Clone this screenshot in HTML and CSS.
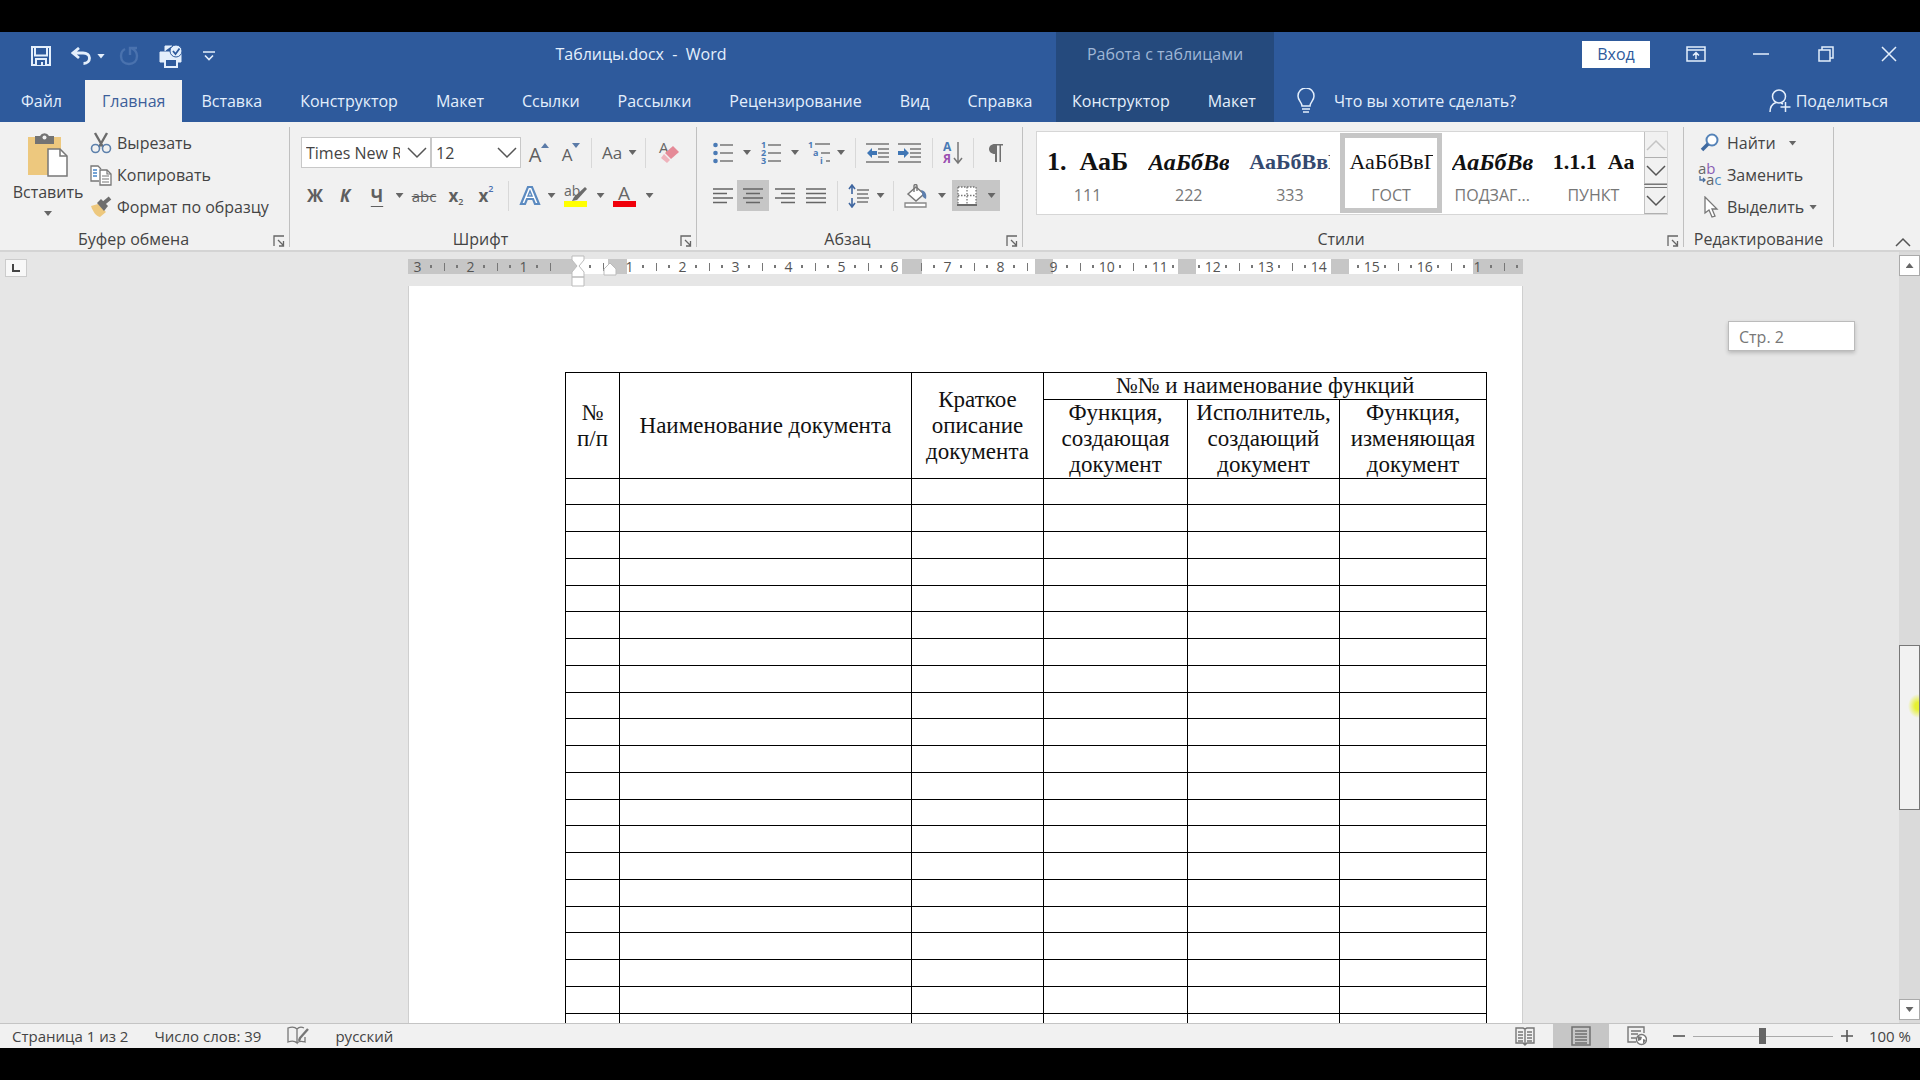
FILE: index.html
```html
<!DOCTYPE html>
<html lang="ru">
<head>
    <meta charset="UTF-8">
    <meta name="viewport" content="width=device-width, initial-scale=1.0">
    <title>Таблицы.docx - Word</title>
    <link rel="stylesheet" href="styles.css">
</head>
<body>
    <svg class="sprite" aria-hidden="true">
        <symbol id="launcher" viewBox="0 0 12 12"><path d="M1 11V1h10M5 5l5 5M10.5 6v5H6" fill="none" stroke="#666" stroke-width="1.3"/></symbol>
        <symbol id="chevron" viewBox="0 0 20 12"><path d="M1 1l9 9 9-9" fill="none" stroke="#555" stroke-width="1.5"/></symbol>
    </svg>

    <header class="header">
        <div class="title-row">
            <div class="quick">
                <button class="quick-btn" aria-label="Сохранить">
                    <svg width="20" height="20" viewBox="0 0 20 20"><path d="M1 1h18v18H1z" fill="none" stroke="#e4effc" stroke-width="2"/><path d="M3 9.5h14M4 2v7M16 2v7" stroke="#e4effc" stroke-width="2"/><path d="M4 12h12v7H4z" fill="#e4effc"/><path d="M6 14h8v5h-2v-3h-2v3H6z" fill="#2e5a9c"/></svg>
                </button>
                <button class="quick-btn undo" aria-label="Отменить">
                    <svg width="20" height="18" viewBox="0 0 20 18"><path d="M8 1L2 6l6 5M2 6h10c4 0 6.500 2 6.500 5s-2 5.500-6 5.500" fill="none" stroke="#e4effc" stroke-width="2.800"/></svg>
                    <span class="caret light"></span>
                </button>
                <button class="quick-btn" aria-label="Повторить">
                    <svg width="20" height="20" viewBox="0 0 20 20"><path d="M6 3C3 4.500 2 7 2 10c0 5 3.500 8 8 8s8-3 8-8c0-4-2-6-5-7.500M11 9V2h7" fill="none" stroke="#4a72ae" stroke-width="2.400"/></svg>
                </button>
                <button class="quick-btn" aria-label="Быстрая печать">
                    <svg width="24" height="24" viewBox="0 0 24 24"><path d="M6 7V2h7M1 8h21v10H1z" fill="#e4effc" stroke="#e4effc"/><path d="M6 15h12v8H6z" fill="#2e5a9c" stroke="#e4effc" stroke-width="2"/><circle cx="17" cy="7" r="6" fill="#e4effc" stroke="#2e5a9c"/><path d="M14 7l2.500 3 4-5.500" fill="none" stroke="#2e5a9c" stroke-width="1.800"/></svg>
                </button>
                <button class="quick-btn" aria-label="Настройка панели">
                    <svg width="12" height="10" viewBox="0 0 12 10"><path d="M0 1h12M2 4.500l4 4 4-4" fill="none" stroke="#e4effc" stroke-width="1.600"/></svg>
                </button>
            </div>
            <div class="title">Таблицы.docx&nbsp; -&nbsp; Word</div>
            <div class="context-title">Работа с таблицами</div>
            <div class="window-btns">
                <button class="login">Вход</button>
                <button class="win-btn" aria-label="Параметры ленты">
                    <svg width="20" height="16" viewBox="0 0 20 16"><path d="M1 1h18v14H1zM1 4h18M10 13V7M7 9.500L10 6.500l3 3" fill="none" stroke="#e4effc" stroke-width="1.500"/></svg>
                </button>
                <button class="win-btn" aria-label="Свернуть">
                    <svg width="16" height="16" viewBox="0 0 16 16"><path d="M0 8h16" stroke="#e4effc" stroke-width="1.500"/></svg>
                </button>
                <button class="win-btn" aria-label="Окно">
                    <svg width="16" height="16" viewBox="0 0 16 16"><path d="M1 4h11v11H1zM4 4V1h11v11h-3" fill="none" stroke="#e4effc" stroke-width="1.500"/></svg>
                </button>
                <button class="win-btn" aria-label="Закрыть">
                    <svg width="16" height="16" viewBox="0 0 16 16"><path d="M1 1l14 14M15 1L1 15" stroke="#e4effc" stroke-width="1.500"/></svg>
                </button>
            </div>
        </div>
        <nav class="tabs">
            <div class="tabs-main">
                <a class="tab" href="#">Файл</a>
                <a class="tab active" href="#">Главная</a>
                <a class="tab" href="#">Вставка</a>
                <a class="tab" href="#">Конструктор</a>
                <a class="tab" href="#">Макет</a>
                <a class="tab" href="#">Ссылки</a>
                <a class="tab" href="#">Рассылки</a>
                <a class="tab" href="#">Рецензирование</a>
                <a class="tab" href="#">Вид</a>
                <a class="tab" href="#">Справка</a>
            </div>
            <div class="tabs-context">
                <a class="tab" href="#">Конструктор</a>
                <a class="tab" href="#">Макет</a>
            </div>
            <label class="tell-me">
                <svg width="18" height="26" viewBox="0 0 18 26"><path d="M5 18c0-4-4-5-4-10a8 8 0 0 1 16 0c0 5-4 6-4 10zM5 21h8M6 24h6" fill="none" stroke="#e4effc" stroke-width="1.500"/></svg>
                <input type="text" placeholder="Что вы хотите сделать?" aria-label="Что вы хотите сделать?">
            </label>
            <button class="share">
                <svg width="22" height="24" viewBox="0 0 22 24"><circle cx="10" cy="7.500" r="6.500" fill="none" stroke="#e4effc" stroke-width="1.500"/><path d="M1 23c0-5 2-8 6-9.500M12 14l2 1M16.500 13v10M11.500 18h10" fill="none" stroke="#e4effc" stroke-width="1.500"/></svg>
                Поделиться
            </button>
        </nav>
    </header>

    <section class="ribbon">
        <div class="group clipboard">
            <div class="group-body">
                <button class="paste">
                    <svg width="42" height="44" viewBox="0 0 42 44"><path d="M1 4h33v38H1z" fill="#edc87e"/><path d="M8 3h5a5 5 0 0 1 9 0h5v8H8z" fill="#737373"/><circle cx="17.500" cy="4.500" r="2" fill="#f1f1f1"/><path d="M21 16h12l7 7v20H21z" fill="#fff" stroke="#777" stroke-width="1.500"/><path d="M33 16v7h7" fill="none" stroke="#777" stroke-width="1.500"/></svg>
                    <span>Вставить</span>
                    <span class="caret"></span>
                </button>
                <div class="commands">
                    <button class="command">
                        <svg width="22" height="22" viewBox="0 0 22 22"><path d="M5 1l8 14M17 1L9 15" stroke="#6b6b6b" stroke-width="2.400"/><circle cx="5.500" cy="16.500" r="4" fill="none" stroke="#5d80ab" stroke-width="1.600"/><circle cx="16.500" cy="16.500" r="4" fill="none" stroke="#5d80ab" stroke-width="1.600"/></svg>
                        Вырезать
                    </button>
                    <button class="command">
                        <svg width="22" height="22" viewBox="0 0 22 22"><path d="M9 17H1V2h7l3 3" fill="#fff" stroke="#777" stroke-width="1.300"/><path d="M3 6h4M3 9h4M3 12h4" stroke="#4a86c8" stroke-width="1.300"/><path d="M10 6h7l4 4v11H10z" fill="#fff" stroke="#777" stroke-width="1.300"/><path d="M12 12h7M12 15h7M12 18h7M17 6v4h4" fill="none" stroke="#777" stroke-width="1.200"/></svg>
                        Копировать
                    </button>
                    <button class="command">
                        <svg width="22" height="22" viewBox="0 0 22 22"><path d="M1 10l7-2 8 8-6 5c-4-1-7-5-9-11z" fill="#edc87e"/><path d="M7 7l4-4 7 7-4 5z" fill="#6e6e6e"/><path d="M14 7l6-5" stroke="#6e6e6e" stroke-width="4"/></svg>
                        Формат по образцу
                    </button>
                </div>
            </div>
            <div class="group-label">Буфер обмена</div>
            <button class="launcher" aria-label="Буфер обмена"><svg width="12" height="12"><use href="#launcher"/></svg></button>
        </div>

        <div class="group font">
            <div class="group-body rows">
                <div class="tool-row">
                    <span class="combo combo-font">
                        <select aria-label="Шрифт"><option>Times New Roman</option></select>
                        <svg class="chev" width="20" height="12"><use href="#chevron"/></svg>
                    </span>
                    <span class="combo combo-size">
                        <select aria-label="Размер"><option>12</option></select>
                        <svg class="chev" width="20" height="12"><use href="#chevron"/></svg>
                    </span>
                    <button class="tool w36 grow" aria-label="Увеличить">A<svg width="8" height="5"><path d="M0 5l4-5 4 5z" fill="#5b7ba8"/></svg></button>
                    <button class="tool w28 grow small" aria-label="Уменьшить">A<svg width="8" height="5"><path d="M0 0l4 5 4-5z" fill="#5b7ba8"/></svg></button>
                    <span class="sep"></span>
                    <button class="tool w28 case">Aa</button>
                    <span class="caret-box"><span class="caret"></span></span>
                    <span class="sep"></span>
                    <button class="tool w32" aria-label="Очистить">
                        <svg width="24" height="24" viewBox="0 0 24 24"><text x="3" y="12" font-size="15" class="glyph">A</text><path d="M17 5l6 6-8 7-6-6z" fill="#e58a97"/><path d="M8 13l6 6-3 3-6-5z" fill="#efb3bc"/></svg>
                    </button>
                </div>
                <div class="tool-row">
                    <button class="tool w28 b">Ж</button>
                    <button class="tool w32 b i">К</button>
                    <button class="tool w32 b u">Ч</button>
                    <span class="caret-box"><span class="caret"></span></span>
                    <button class="tool w36 strike">abc</button>
                    <button class="tool w28 b">x<sub>2</sub></button>
                    <button class="tool w32 b">x<sup>2</sup></button>
                    <span class="sep"></span>
                    <button class="tool w30" aria-label="Эффекты">
                        <svg width="22" height="24" viewBox="0 0 22 24"><path d="M2 20L9 3h4l7 17h-4l-2-5H8l-2 5z" fill="#fff" stroke="#5b8ac0" stroke-width="2.200"/><path d="M9 12h4l-2-5z" fill="#fff" stroke="#5b8ac0" stroke-width="1.500"/></svg>
                    </button>
                    <span class="caret-box"><span class="caret"></span></span>
                    <button class="tool w36" aria-label="Выделение цветом">
                        <svg width="24" height="24" viewBox="0 0 24 24"><text x="0" y="12" font-size="14" class="glyph">ab</text><path d="M21 3l2 2-10 11-5 1 2-4z" fill="#6b6b6b"/><path d="M0 17h23v6H0z" fill="#ff0"/></svg>
                    </button>
                    <span class="caret-box"><span class="caret"></span></span>
                    <button class="tool w36" aria-label="Цвет текста">
                        <svg width="24" height="24" viewBox="0 0 24 24"><text x="5" y="16" font-size="19" class="glyph">A</text><path d="M0 17h23v6H0z" fill="#f0000a"/></svg>
                    </button>
                    <span class="caret-box"><span class="caret"></span></span>
                </div>
            </div>
            <div class="group-label">Шрифт</div>
            <button class="launcher" aria-label="Шрифт"><svg width="12" height="12"><use href="#launcher"/></svg></button>
        </div>

        <div class="group paragraph">
            <div class="group-body rows">
                <div class="tool-row">
                    <button class="tool w28" aria-label="Маркеры">
                        <svg width="20" height="22" viewBox="0 0 20 22"><path d="M7 3h13M7 11h13M7 19h13" stroke="#777" stroke-width="1.500"/><g fill="#4a7ab5"><circle cx="2.500" cy="3" r="2.300"/><circle cx="2.500" cy="11" r="2.300"/><circle cx="2.500" cy="19" r="2.300"/></g></svg>
                    </button>
                    <span class="caret-box wide"><span class="caret"></span></span>
                    <button class="tool w28" aria-label="Нумерация">
                        <svg width="20" height="24" viewBox="0 0 20 24"><path d="M7 4h13M7 12h13M7 20h13" stroke="#777" stroke-width="1.500"/><g class="digits" font-size="9"><text x="0" y="7">1</text><text x="0" y="15">2</text><text x="0" y="23">3</text></g></svg>
                    </button>
                    <span class="caret-box wide"><span class="caret"></span></span>
                    <button class="tool w28" aria-label="Многоуровневый список">
                        <svg width="24" height="24" viewBox="0 0 24 24"><path d="M8 3h15M14 12h9M19 20h4" stroke="#777" stroke-width="1.500"/><g class="digits" font-size="9"><text x="1" y="7">1</text><text x="6" y="15">a</text><text x="13" y="23">i</text></g></svg>
                    </button>
                    <span class="caret-box mid"><span class="caret"></span></span>
                    <span class="sep"></span>
                    <button class="tool w32" aria-label="Уменьшить отступ">
                        <svg width="24" height="20" viewBox="0 0 24 20"><path d="M0 1h23M12 6h11M12 10h11M12 14h11M0 19h23" stroke="#777" stroke-width="1.500"/><path d="M1 10l5-5v3h5v4H6v3z" fill="#3f76b5"/></svg>
                    </button>
                    <button class="tool w32" aria-label="Увеличить отступ">
                        <svg width="24" height="20" viewBox="0 0 24 20"><path d="M0 1h23M12 6h11M12 10h11M12 14h11M0 19h23" stroke="#777" stroke-width="1.500"/><path d="M11 10L6 5v3H0v4h6v3z" fill="#3f76b5"/></svg>
                    </button>
                    <span class="sep"></span>
                    <button class="tool w28" aria-label="Сортировка">
                        <svg width="20" height="24" viewBox="0 0 20 24"><text x="0" y="10" font-size="12" font-weight="700" fill="#4a7ab5">А</text><text x="0" y="22" font-size="12" font-weight="700" fill="#9a4fb0">Я</text><path d="M15 1v20M11 17l4 5 4-5" fill="none" stroke="#777" stroke-width="1.500"/></svg>
                    </button>
                    <span class="sep"></span>
                    <button class="tool w32" aria-label="Знаки">
                        <svg width="16" height="20" viewBox="0 0 16 20"><path d="M7 11C3 11 1 8.500 1 6s2-5 6-5h8v1.500h-2V19h-1.500V2.500H9V19H7z" fill="#707070"/></svg>
                    </button>
                </div>
                <div class="tool-row">
                    <button class="tool w28" aria-label="По левому краю">
                        <svg width="20" height="16" viewBox="0 0 20 16"><path d="M0 1h20M0 5.500h14M0 10h20M0 14.500h14" stroke="#666" stroke-width="1.500"/></svg>
                    </button>
                    <button class="tool w32 on" aria-label="По центру">
                        <svg width="20" height="16" viewBox="0 0 20 16"><path d="M0 1h20M3 5.500h14M0 10h20M3 14.500h14" stroke="#666" stroke-width="1.500"/></svg>
                    </button>
                    <button class="tool w32" aria-label="По правому краю">
                        <svg width="20" height="16" viewBox="0 0 20 16"><path d="M0 1h20M6 5.500h14M0 10h20M6 14.500h14" stroke="#666" stroke-width="1.500"/></svg>
                    </button>
                    <button class="tool w30" aria-label="По ширине">
                        <svg width="20" height="16" viewBox="0 0 20 16"><path d="M0 1h20M0 5.500h20M0 10h20M0 14.500h20" stroke="#666" stroke-width="1.500"/></svg>
                    </button>
                    <span class="sep"></span>
                    <button class="tool w30" aria-label="Интервал">
                        <svg width="22" height="24" viewBox="0 0 22 24"><path d="M9 6h12M9 10h11M9 14h12M9 18h11" stroke="#777" stroke-width="1.500"/><path d="M4 2v8M1 5l3-4 3 4M4 14v8M1 19l3 4 3-4" fill="none" stroke="#3f66a0" stroke-width="1.600"/></svg>
                    </button>
                    <span class="caret-box"><span class="caret"></span></span>
                    <span class="sep"></span>
                    <button class="tool w32" aria-label="Заливка">
                        <svg width="24" height="24" viewBox="0 0 24 24"><path d="M4 10l8-7 8 7-8 7z" fill="#fff" stroke="#777" stroke-width="1.500"/><path d="M10 8V2c0-2 3-2 3 0v5" fill="none" stroke="#777" stroke-width="1.400"/><path d="M17 6c5 1 6 5 5 9-3-1-4-3-4-6z" fill="#5d7fae"/><path d="M1 19h21v4H1z" fill="#fff" stroke="#888" stroke-width="1.300"/></svg>
                    </button>
                    <span class="caret-box wide"><span class="caret"></span></span>
                    <button class="tool w48 on" aria-label="Границы">
                        <svg width="20" height="20" viewBox="0 0 20 20"><path d="M1 1h18v17H1z" fill="#fff"/><path d="M1 1h18M1 9.500h18M1 1v17M10 1v17M19 1v17" fill="none" stroke="#777" stroke-width="1.300" stroke-dasharray="1.500 1.500"/><path d="M0 19h20" stroke="#555" stroke-width="1.600"/></svg>
                        <span class="caret"></span>
                    </button>
                </div>
            </div>
            <div class="group-label">Абзац</div>
            <button class="launcher" aria-label="Абзац"><svg width="12" height="12"><use href="#launcher"/></svg></button>
        </div>

        <div class="group styles">
            <div class="gallery">
                <div class="gallery-items">
                    <button class="style"><span class="preview big">1.&nbsp; АаБ</span><span class="style-name">111</span></button>
                    <button class="style"><span class="preview slanted">АаБбВв</span><span class="style-name">222</span></button>
                    <button class="style"><span class="preview blue">АаБбВвГ</span><span class="style-name">333</span></button>
                    <button class="style selected"><span class="preview">АаБбВвГ</span><span class="style-name">ГОСТ</span></button>
                    <button class="style"><span class="preview slanted">АаБбВв</span><span class="style-name">ПОДЗАГ...</span></button>
                    <button class="style"><span class="preview bold">1.1.1&nbsp; Аа</span><span class="style-name">ПУНКТ</span></button>
                </div>
                <div class="gallery-scroll">
                    <button aria-label="Вверх"><svg width="20" height="12" viewBox="0 0 20 12"><path d="M1 11l9-9 9 9" fill="none" stroke="#c4c4c4" stroke-width="1.500"/></svg></button>
                    <button aria-label="Вниз"><svg width="20" height="12"><use href="#chevron"/></svg></button>
                    <button class="more" aria-label="Дополнительно"><svg width="20" height="12"><use href="#chevron"/></svg></button>
                </div>
            </div>
            <div class="group-label">Стили</div>
            <button class="launcher" aria-label="Стили"><svg width="12" height="12"><use href="#launcher"/></svg></button>
        </div>

        <div class="group editing">
            <div class="commands">
                <button class="command">
                    <svg width="20" height="20" viewBox="0 0 20 20"><circle cx="12" cy="7" r="5.500" fill="#fff" stroke="#5583b8" stroke-width="2"/><path d="M8 11l-6 6" stroke="#3f69a0" stroke-width="3.500"/></svg>
                    Найти <span class="caret far"></span>
                </button>
                <button class="command">
                    <svg width="24" height="24" viewBox="0 0 24 24"><text x="0" y="11" font-size="15" class="glyph">a<tspan fill="#8a5fb5">b</tspan></text><text x="8" y="22" font-size="15" class="glyph">a<tspan fill="#4a8ac0">c</tspan></text><path d="M2 13v4h5M5 15l2 2-2 2" fill="none" stroke="#4a6f9f" stroke-width="1.300"/></svg>
                    Заменить
                </button>
                <button class="command">
                    <svg width="20" height="22" viewBox="0 0 20 22"><path d="M5 1v16l4-3 3 7 3-1-3-7h5z" fill="#fff" stroke="#777" stroke-width="1.300"/></svg>
                    Выделить<span class="caret"></span>
                </button>
            </div>
            <div class="group-label">Редактирование</div>
        </div>
        <button class="collapse" aria-label="Свернуть ленту"><svg width="16" height="10" viewBox="0 0 16 10"><path d="M1 9l7-7 7 7" fill="none" stroke="#555" stroke-width="1.500"/></svg></button>
    </section>

    <main class="workspace">
        <div class="gutter"><button class="tab-type" aria-label="Позиция табуляции"><svg width="8" height="8" viewBox="0 0 8 8"><path d="M1 0v7h7" fill="none" stroke="#444" stroke-width="2"/></svg></button></div>
        <div class="canvas">
            <div class="ruler">
                <div class="ruler-scale" id="ruler"></div>
                <svg class="indent indent-left" width="14" height="32" viewBox="0 0 14 32"><path d="M1 1h12v4l-5 6 5 6v5H1v-5l5-6-5-6zM1 22h12v9H1z" fill="#fff" stroke="#bbb"/></svg>
                <svg class="indent indent-right" width="14" height="14" viewBox="0 0 14 14"><path d="M7 1l6 6v6H1V7z" fill="#fff" stroke="#bbb"/></svg>
            </div>
            <article class="page">
                <table class="doc-table">
                    <colgroup>
                        <col class="c-num"><col class="c-name"><col class="c-desc"><col class="c-make"><col class="c-who"><col class="c-edit">
                    </colgroup>
                    <thead>
                        <tr>
                            <th rowspan="2">№<br>п/п</th>
                            <th rowspan="2">Наименование документа</th>
                            <th rowspan="2">Краткое<br>описание<br>документа</th>
                            <th colspan="3">№№ и наименование функций</th>
                        </tr>
                        <tr>
                            <th>Функция,<br>создающая<br>документ</th>
                            <th>Исполнитель,<br>создающий<br>документ</th>
                            <th>Функция,<br>изменяющая<br>документ</th>
                        </tr>
                    </thead>
                    <tbody id="rows"></tbody>
                </table>
            </article>
            <div class="page-tip">Стр. 2</div>
        </div>
        <div class="scrollbar">
            <button class="scroll-btn" aria-label="Вверх"><span class="caret up"></span></button>
            <div class="scroll-track"><div class="scroll-thumb"><span class="pointer-glow"></span></div></div>
            <button class="scroll-btn" aria-label="Вниз"><span class="caret"></span></button>
        </div>
    </main>

    <footer class="status">
        <span>Страница 1 из 2</span>
        <span>Число слов: 39</span>
        <button aria-label="Правописание">
            <svg width="22" height="20" viewBox="0 0 22 20"><path d="M10 17V3C8 1 4 1 1 2v14c3-1 7-1 9 1zM10 3c2-2 5-2 7-1M10 17c2-2 5-2 8-1v-5" fill="none" stroke="#777" stroke-width="1.300"/><path d="M21 3l-8 9-1 3" fill="none" stroke="#777" stroke-width="2.400"/></svg>
        </button>
        <span>русский</span>
        <div class="views">
            <button class="view" aria-label="Режим чтения">
                <svg width="20" height="20" viewBox="0 0 20 20"><path d="M10 3L8 2H1v15h7l2 2 2-2h7V2h-7zM10 3v15M3 6h5M3 9h5M3 12h5M3 15h5M12 6h5M12 9h5M12 12h5M12 15h5" fill="none" stroke="#777" stroke-width="1.400"/></svg>
            </button>
            <button class="view on" aria-label="Разметка страницы">
                <svg width="20" height="20" viewBox="0 0 20 20"><path d="M1 1h18v18H1zM4 5h12M4 8h12M4 11h12M4 14h12M4 17h12" fill="none" stroke="#707070" stroke-width="1.500"/></svg>
            </button>
            <button class="view" aria-label="Веб-документ">
                <svg width="20" height="20" viewBox="0 0 20 20"><path d="M9 16H1V1h16v6M4 5h10M4 8h7M4 12h5" fill="none" stroke="#777" stroke-width="1.400"/><circle cx="14.500" cy="13.500" r="5" fill="#fff" stroke="#777" stroke-width="1.400"/><path d="M11 10l4 1-1 3-3 1zM16 13l3 1-3 4z" fill="#777"/></svg>
            </button>
        </div>
        <div class="zoom">
            <button aria-label="Уменьшить"><svg width="12" height="12" viewBox="0 0 12 12"><path d="M0 6h12" stroke="#555" stroke-width="1.600"/></svg></button>
            <input type="range" min="0" max="100" value="50" aria-label="Масштаб">
            <button aria-label="Увеличить"><svg width="12" height="12" viewBox="0 0 12 12"><path d="M0 6h12M6 0v12" stroke="#555" stroke-width="1.600"/></svg></button>
            <span class="zoom-value">100 %</span>
        </div>
    </footer>

    <script>
        // label, then which of the three marks after it are visible
        const marks = [
            ['3', '111'], ['2', '111'], ['1', '110'], ['', '110'],
            ['1', '111'], ['2', '111'], ['3', '111'], ['4', '111'], ['5', '111'], ['6', '011'],
            ['7', '111'], ['8', '110'], ['9', '111'], ['10', '111'], ['11', '101'],
            ['12', '111'], ['13', '111'], ['14', '001'], ['15', '111'], ['16', '111'], ['1', '111']
        ];

        const ruler = document.getElementById('ruler');
        marks.forEach(function(mark) {
            const cell = document.createElement('div');
            cell.className = 'cm';
            const label = document.createElement('span');
            label.className = 'cm-label';
            label.textContent = mark[0];
            cell.appendChild(label);
            for (let i = 0; i < 3; i++) {
                const tick = document.createElement('span');
                tick.className = i === 1 ? 'tick half' : 'tick';
                if (mark[1][i] === '0') {
                    tick.classList.add('hidden');
                }
                cell.appendChild(tick);
            }
            ruler.appendChild(cell);
        });

        const rows = document.getElementById('rows');
        for (let i = 0; i < 24; i++) {
            const row = rows.insertRow();
            for (let j = 0; j < 6; j++) {
                row.insertCell();
            }
        }
    </script>
</body>
</html>
```
FILE: styles.css
```css
* {
    box-sizing: border-box;
}

body {
    margin: 0;
    padding: 32px 0;
    height: 100vh;
    display: flex;
    flex-direction: column;
    overflow: hidden;
    background: #000;
    color: #444;
    font-family: "Open Sans", "Noto Sans", sans-serif;
    font-size: 16px;
    line-height: 20px;
}

button,
input,
select {
    margin: 0;
    padding: 0;
    border: none;
    background: none;
    color: inherit;
    font: inherit;
}

svg {
    flex: none;
    display: block;
}

.sprite {
    position: absolute;
    width: 0;
    height: 0;
}

.caret {
    flex: none;
    width: 8px;
    height: 5px;
    background: #666;
    clip-path: polygon(0 0, 100% 0, 50% 100%);
}

.caret.light {
    background: #e4effc;
}

.caret.up {
    clip-path: polygon(0 100%, 100% 100%, 50% 0);
}

/* header */

.header {
    flex: none;
    background: #2e5a9c;
    color: #e4effc;
}

.title-row {
    display: flex;
    height: 48px;
}

.quick {
    width: 226px;
    padding-left: 31px;
    display: flex;
    align-items: center;
    gap: 20px;
}

.quick-btn {
    display: flex;
    align-items: center;
}

.undo {
    gap: 6px;
    margin-right: -6px;
}

.title {
    width: 830px;
    line-height: 44px;
    text-align: center;
}

.context-title {
    width: 218px;
    line-height: 44px;
    text-align: center;
    background: #254a7d;
    color: #9fb6d6;
}

.window-btns {
    margin-left: auto;
    padding-bottom: 4px;
    display: flex;
    align-items: center;
}

.login {
    width: 68px;
    height: 27px;
    margin-right: 13px;
    background: #fff;
    color: #2e5a9c;
}

.win-btn {
    width: 65px;
    display: flex;
    justify-content: center;
}

.win-btn:last-child {
    width: 62px;
}

.tabs {
    display: flex;
    height: 42px;
}

.tabs-main {
    display: flex;
    width: 1056px;
    padding-left: 2px;
}

.tabs-context {
    display: flex;
    width: 218px;
    background: #254a7d;
}

.tab {
    padding: 0 19px;
    line-height: 42px;
    color: inherit;
    text-decoration: none;
}

.tab.active {
    margin-left: 4px;
    padding: 0 17px;
    background: #f1f1f1;
    color: #3d5f9a;
}

.tabs-context .tab {
    padding: 0 22px 0 16px;
}

.tell-me {
    display: flex;
    align-items: center;
    gap: 19px;
    padding-left: 23px;
}

.tell-me input {
    width: 220px;
    outline: none;
}

.tell-me input::placeholder {
    color: #e4effc;
}

.share {
    margin-left: auto;
    padding-right: 32px;
    display: flex;
    align-items: center;
    gap: 5px;
}

/* ribbon */

.ribbon {
    flex: none;
    display: flex;
    height: 130px;
    padding: 5px 0 3px;
    background: #f1f1f1;
    border-bottom: 2px solid #d4d4d4;
}

.group {
    position: relative;
    display: flex;
    flex-direction: column;
    border-right: 1px solid #c0c0c0;
}

.group-body {
    display: flex;
}

.group-label {
    margin-top: auto;
    text-align: center;
    line-height: 16px;
}

.launcher {
    position: absolute;
    right: 4px;
    bottom: 0;
}

.clipboard {
    width: 290px;
}

.clipboard .group-label {
    padding-right: 22px;
}

.font {
    width: 407px;
    padding-left: 11px;
}

.paragraph {
    width: 326px;
    padding-left: 12px;
}

.font .group-label,
.paragraph .group-label {
    padding-right: 36px;
}

.styles {
    flex: 1;
    padding: 4px 15px 0 13px;
}

.styles .group-label {
    padding-right: 22px;
}

.editing {
    width: 150px;
}

.paste {
    width: 90px;
    padding: 6px 0 0 6px;
    display: flex;
    flex-direction: column;
    align-items: center;
    gap: 5px;
}

.paste .caret {
    margin-top: 4px;
}

.commands {
    display: flex;
    flex-direction: column;
}

.command {
    display: flex;
    align-items: center;
    gap: 5px;
    height: 32px;
    white-space: nowrap;
}

.rows {
    flex-direction: column;
    padding-top: 10px;
    gap: 12px;
}

.tool-row {
    display: flex;
    align-items: center;
    height: 31px;
}

.tool {
    flex: none;
    display: flex;
    align-items: center;
    justify-content: center;
    height: 31px;
    color: #5f5f5f;
}

.w28 {
    width: 28px;
}

.w30 {
    width: 30px;
}

.w32 {
    width: 32px;
}

.w36 {
    width: 36px;
}

.w48 {
    width: 48px;
    gap: 11px;
}

.tool.on {
    background: #c6c6c6;
}

.sep {
    flex: none;
    width: 1px;
    height: 30px;
    margin: 0 6px;
    background: #d8d8d8;
}

.caret-box {
    flex: none;
    width: 13px;
    display: flex;
    justify-content: center;
}

.caret-box.mid {
    width: 16px;
}

.caret-box.wide {
    width: 20px;
}

.combo {
    position: relative;
    height: 31px;
}

.combo select {
    appearance: none;
    width: 100%;
    height: 31px;
    padding: 0 30px 0 4px;
    background: #fff;
    border: 1px solid #c8c8c8;
    border-radius: 0;
}

.combo-font {
    width: 130px;
}

.combo-size {
    width: 90px;
}

.chev {
    position: absolute;
    right: 4px;
    top: 10px;
    pointer-events: none;
}

.grow {
    font-size: 20px;
    align-items: flex-end;
    line-height: 26px;
}

.grow svg {
    align-self: flex-start;
    margin-top: 6px;
}

.grow.small {
    font-size: 17px;
}

.case {
    font-size: 17px;
}

.b {
    font-weight: 700;
    font-size: 17px;
}

.i {
    font-style: italic;
}

.u {
    text-decoration: underline;
    text-underline-offset: 4px;
}

.strike {
    text-decoration: line-through;
    font-size: 15px;
}

.b sub,
.b sup {
    font-size: 9px;
    line-height: 10px;
    font-weight: 600;
}

.b sub {
    align-self: flex-end;
    margin-bottom: 4px;
}

.b sup {
    align-self: flex-start;
    margin-top: 4px;
    color: #4a6fb0;
}

.glyph {
    fill: #666;
}

.digits {
    fill: #4a7ab5;
    font-weight: 700;
}

/* style gallery */

.gallery {
    display: flex;
    height: 84px;
    border: 1px solid #d6d6d6;
}

.gallery-items {
    flex: 1;
    display: grid;
    grid-template-columns: repeat(6, 1fr);
    padding: 1px 0;
    background: #fff;
}

.style {
    min-width: 0;
    padding: 0 5px;
    border: 5px solid transparent;
}

.style.selected {
    padding: 0 4px;
    border-color: #c6c6c6;
}

.preview {
    display: block;
    height: 38px;
    overflow: hidden;
    white-space: nowrap;
    text-align: left;
    color: #111;
    font-family: "Liberation Serif", serif;
    font-size: 22px;
    line-height: 42px;
}

.preview.big {
    font-size: 26px;
    font-weight: 700;
}

.preview.slanted {
    font-size: 24px;
    font-weight: 700;
    font-style: italic;
}

.preview.blue {
    color: #34496f;
    font-weight: 700;
}

.preview.bold {
    font-weight: 700;
}

.style-name {
    display: block;
    padding-top: 6px;
    color: #777;
    white-space: nowrap;
}

.gallery-scroll {
    width: 23px;
    display: flex;
    flex-direction: column;
}

.gallery-scroll button {
    flex: 1;
    display: flex;
    align-items: center;
    justify-content: center;
    border-left: 1px solid #c0c0c0;
    border-bottom: 1px solid #b0b0b0;
}

.gallery-scroll .more {
    border-top: 4px double #777;
}

.editing .commands {
    padding-left: 14px;
}

.editing .command svg {
    width: 24px;
}

.caret.far {
    margin-left: 8px;
}

.collapse {
    align-self: flex-end;
    margin: 0 9px 0 61px;
}

/* workspace */

.workspace {
    flex: 1;
    min-height: 0;
    display: flex;
    background: #e6e6e6;
}

.gutter {
    width: 32px;
    padding: 7px 0 0 5px;
}

.tab-type {
    width: 22px;
    height: 18px;
    display: flex;
    align-items: center;
    justify-content: center;
    background: #f8f8f8;
    border: 1px solid #ccc;
}

.canvas {
    position: relative;
    flex: 1;
    min-width: 0;
    display: flex;
    flex-direction: column;
    align-items: center;
    overflow: hidden;
}

.ruler {
    position: relative;
    flex: none;
    width: 1115px;
    height: 34px;
    padding-top: 7px;
}

.ruler-scale {
    display: flex;
    height: 15px;
    padding-left: 3px;
    overflow: hidden;
    background: linear-gradient(to right,
        #c6c6c6 170px, #fff 170px 200px, #c6c6c6 200px 219px,
        #fff 219px 494px, #c6c6c6 494px 514px, #fff 514px 627px,
        #c6c6c6 627px 645px, #fff 645px 770px, #c6c6c6 770px 788px,
        #fff 788px 923px, #c6c6c6 923px 941px, #fff 941px 1065px,
        #c6c6c6 1065px);
}

.cm {
    flex: none;
    width: 53px;
    display: grid;
    grid-template-columns: repeat(4, 1fr);
    align-items: center;
    justify-items: center;
    font-size: 14px;
    line-height: 15px;
    color: #555;
}

.cm-label {
    display: flex;
    justify-content: center;
    width: 13px;
}

.tick {
    width: 2px;
    height: 3px;
    background: #777;
}

.tick.half {
    width: 1px;
    height: 8px;
}

.tick.hidden {
    visibility: hidden;
}

.indent {
    position: absolute;
}

.indent-left {
    left: 163px;
    top: 3px;
}

.indent-right {
    left: 195px;
    top: 10px;
}

.page {
    flex: 1;
    width: 1115px;
    min-height: 0;
    padding: 86px 0 0 156px;
    overflow: hidden;
    background: #fff;
    border: solid #cfcfcf;
    border-width: 0 1px;
}

.doc-table {
    width: 921px;
    table-layout: fixed;
    border-collapse: collapse;
    color: #111;
    font-family: "Liberation Serif", serif;
    font-size: 23px;
    line-height: 26px;
}

.doc-table th,
.doc-table td {
    padding: 0;
    border: 1px solid #000;
    font-weight: 400;
    white-space: nowrap;
}

.doc-table tbody tr {
    height: 27px;
}

/* keeps the average row at 26.75px */
.doc-table tbody tr:nth-child(4n + 1) {
    height: 26px;
}

.c-num {
    width: 54px;
}

.c-name {
    width: 292px;
}

.c-desc {
    width: 132px;
}

.c-make {
    width: 144px;
}

.c-who {
    width: 152px;
}

.c-edit {
    width: 147px;
}

.page-tip {
    position: absolute;
    right: 44px;
    top: 69px;
    width: 127px;
    height: 30px;
    padding-left: 10px;
    background: #fff;
    border: 1px solid #bbb;
    box-shadow: 0 2px 4px rgba(0, 0, 0, 0.2);
    line-height: 30px;
    color: #777;
}

.scrollbar {
    width: 21px;
    padding: 3px 0;
    display: flex;
    flex-direction: column;
    background: #dadada;
}

.scroll-btn {
    height: 21px;
    display: flex;
    align-items: center;
    justify-content: center;
    background: #fff;
    border: 1px solid #aaa;
}

.scroll-track {
    flex: 1;
    display: flex;
    flex-direction: column;
}

.scroll-track::before {
    content: "";
    flex: 370;
}

.scroll-track::after {
    content: "";
    flex: 189;
}

.scroll-thumb {
    position: relative;
    height: 165px;
    overflow: hidden;
    background: #f2f2f2;
    border: 1px solid #777;
}

.pointer-glow {
    position: absolute;
    right: -9px;
    top: 48px;
    width: 20px;
    height: 24px;
    background: radial-gradient(closest-side, #e6f032 30%, rgba(230, 240, 50, 0));
}

/* status bar */

.status {
    flex: none;
    height: 25px;
    display: flex;
    align-items: center;
    gap: 26px;
    padding-left: 12px;
    background: #f1f1f1;
    border-top: 1px solid #c4c4c4;
    font-size: 15px;
}

.views {
    margin-left: auto;
    display: flex;
    height: 24px;
}

.view {
    width: 56px;
    display: flex;
    align-items: center;
    justify-content: center;
}

.view.on {
    background: #c6c6c6;
}

.zoom {
    display: flex;
    align-items: center;
    gap: 8px;
    padding-right: 9px;
    margin-left: -18px;
}

.zoom input {
    appearance: none;
    width: 140px;
    height: 16px;
}

.zoom input::-webkit-slider-runnable-track {
    height: 1px;
    background: #aaa;
}

.zoom input::-webkit-slider-thumb {
    appearance: none;
    width: 7px;
    height: 16px;
    margin-top: -8px;
    background: #666;
}

.zoom-value {
    margin-left: 8px;
    white-space: nowrap;
}
```
